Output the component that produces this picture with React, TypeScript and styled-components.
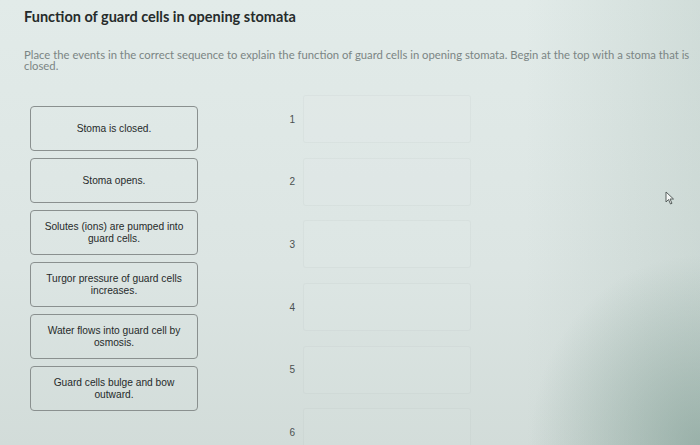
import React from "react";
import styled, { createGlobalStyle } from "styled-components";

const GlobalStyle = createGlobalStyle`
  html, body {
    margin: 0;
    padding: 0;
    width: 700px;
    height: 445px;
    overflow: hidden;
  }
`;

const Page = styled.div`
  position: relative;
  width: 700px;
  height: 445px;
  box-sizing: border-box;
  padding: 8px 0 0 24px;
  background:
    radial-gradient(ellipse 170px 190px at 700px 445px, rgba(125, 155, 145, 0.6), rgba(125, 155, 145, 0) 100%),
    linear-gradient(to right, rgba(255, 255, 255, 0) 75%, rgba(140, 165, 155, 0.2) 100%),
    linear-gradient(to bottom, #e2ebe9 0%, #dce5e3 60%, #d2dcd9 100%);
  overflow: hidden;
`;

const Title = styled.h1`
  margin: 0;
  font-family: Lato, "Open Sans", sans-serif;
  font-weight: 700;
  font-size: 14.5px;
  line-height: 18px;
  color: #262b2b;
`;

const Instructions = styled.p`
  margin: 23px 0 0 0;
  font-family: Lato, "Open Sans", sans-serif;
  font-size: 11.3px;
  line-height: 11px;
  color: #7b8584;
  max-width: 680px;
`;

const Main = styled.div`
  display: flex;
  align-items: flex-start;
  gap: 87px;
`;

const CardsColumn = styled.div`
  display: flex;
  flex-direction: column;
  gap: 7px;
  margin: 35px 0 0 6px;
  width: 168px;
`;

const Card = styled.div`
  height: 45px;
  box-sizing: border-box;
  border: 1px solid #8a908f;
  border-radius: 4px;
  display: flex;
  align-items: center;
  justify-content: center;
  padding: 0 12px;
  text-align: center;
  font-family: "Liberation Sans", Arial, sans-serif;
  font-size: 10.2px;
  line-height: 12px;
  color: #262a2a;
`;

const TargetsColumn = styled.div`
  display: flex;
  flex-direction: column;
  margin-top: 17px;
`;

const TargetRow = styled.div`
  height: 62.6px;
  display: flex;
  align-items: center;
  gap: 8px;
`;

const Num = styled.span`
  width: 10px;
  text-align: right;
  font-family: "Liberation Sans", Arial, sans-serif;
  font-size: 10px;
  color: #4a5050;
`;

const Zone = styled.div`
  width: 168px;
  height: 48px;
  box-sizing: border-box;
  border: 1px solid rgba(140, 158, 153, 0.09);
  border-radius: 3px;
  background: rgba(255, 255, 255, 0.04);
`;

const Cursor = styled.svg`
  position: absolute;
  left: 665px;
  top: 191px;
`;

const cards = [
  "Stoma is closed.",
  "Stoma opens.",
  "Solutes (ions) are pumped into guard cells.",
  "Turgor pressure of guard cells increases.",
  "Water flows into guard cell by osmosis.",
  "Guard cells bulge and bow outward.",
];

export default function App() {
  return (
    <>
      <GlobalStyle />
      <Page>
        <Title>Function of guard cells in opening stomata</Title>
        <Instructions>
          Place the events in the correct sequence to explain the function of guard cells in opening stomata. Begin at the top with a stoma that is closed.
        </Instructions>
        <Main>
          <CardsColumn>
            {cards.map((c) => (
              <Card key={c}>{c}</Card>
            ))}
          </CardsColumn>
          <TargetsColumn>
            {[1, 2, 3, 4, 5, 6].map((n) => (
              <TargetRow key={n}>
                <Num>{n}</Num>
                <Zone />
              </TargetRow>
            ))}
          </TargetsColumn>
        </Main>
        <Cursor width="10" height="14" viewBox="0 0 10 14">
          <path d="M1 1 L1 11 L3.5 8.5 L5.5 13 L7 12.3 L5 8 L8.5 8 Z" fill="#f4f6f5" stroke="#4a5250" strokeWidth="0.9" strokeLinejoin="round" />
        </Cursor>
      </Page>
    </>
  );
}
